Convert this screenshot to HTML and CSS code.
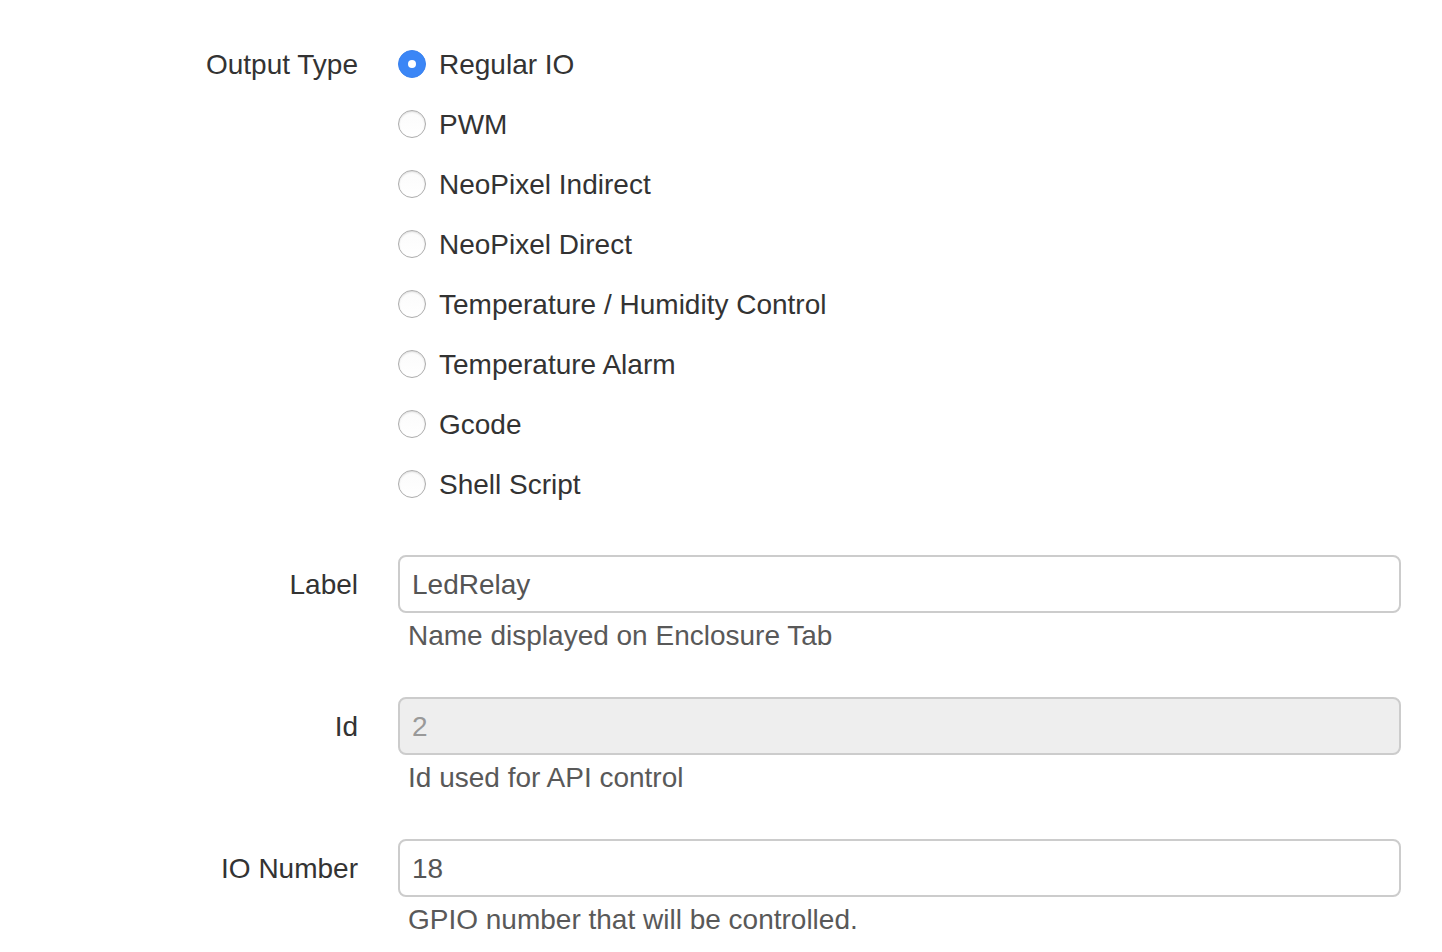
FILE: index.html
```html
<!DOCTYPE html>
<html>
<head>
<meta charset="utf-8">
<link rel="stylesheet" href="styles.css">
</head>
<body>
<form class="form">
  <div class="group radios-group">
    <div class="label">Output Type</div>
    <div class="controls">
      <label class="radio"><input type="radio" name="t" checked><span>Regular IO</span></label>
      <label class="radio"><input type="radio" name="t"><span>PWM</span></label>
      <label class="radio"><input type="radio" name="t"><span>NeoPixel Indirect</span></label>
      <label class="radio"><input type="radio" name="t"><span>NeoPixel Direct</span></label>
      <label class="radio"><input type="radio" name="t"><span>Temperature / Humidity Control</span></label>
      <label class="radio"><input type="radio" name="t"><span>Temperature Alarm</span></label>
      <label class="radio"><input type="radio" name="t"><span>Gcode</span></label>
      <label class="radio"><input type="radio" name="t"><span>Shell Script</span></label>
    </div>
  </div>
  <div class="group">
    <div class="label field-label">Label</div>
    <div class="controls">
      <input class="text" type="text" value="LedRelay">
      <div class="help">Name displayed on Enclosure Tab</div>
    </div>
  </div>
  <div class="group">
    <div class="label field-label">Id</div>
    <div class="controls">
      <input class="text" type="text" value="2" disabled>
      <div class="help">Id used for API control</div>
    </div>
  </div>
  <div class="group">
    <div class="label field-label">IO Number</div>
    <div class="controls">
      <input class="text" type="text" value="18">
      <div class="help">GPIO number that will be controlled.</div>
    </div>
  </div>
</form>
</body>
</html>
```
FILE: styles.css
```css
html, body {
  margin: 0;
  padding: 0;
  background: #fff;
}
body {
  font-family: "Liberation Sans", Arial, sans-serif;
  font-size: 28px;
  color: #333;
  overflow: hidden;
}
.form {
  padding: 34px 41px 0 38px;
}
.group {
  display: grid;
  grid-template-columns: 320px 1fr;
  column-gap: 40px;
  margin-bottom: 42px;
}
.radios-group {
  margin-bottom: 41px;
}
.label {
  text-align: right;
  line-height: 60px;
  padding-top: 1px;
  color: #333;
}
.field-label {
  line-height: 58px;
}
.controls {
  display: flex;
  flex-direction: column;
  min-width: 0;
}
.radio {
  display: flex;
  align-items: center;
  height: 60px;
  gap: 13px;
  cursor: pointer;
}
.radio span {
  padding-top: 2px;
}
.radio input {
  -webkit-appearance: none;
  appearance: none;
  margin: 0;
  width: 28px;
  height: 28px;
  border-radius: 50%;
  border: 1px solid #adadad;
  background: linear-gradient(#fbfbfb, #ffffff);
  box-shadow: inset 0 1px 2px rgba(0, 0, 0, 0.14);
  box-sizing: border-box;
  flex: none;
  position: relative;
}
.radio input:checked {
  background: #3b86f6;
  border-color: #3a82ee;
  box-shadow: none;
}
.radio input:checked::after {
  content: "";
  position: absolute;
  left: 50%;
  top: 50%;
  width: 8px;
  height: 8px;
  margin: -4px 0 0 -4px;
  border-radius: 50%;
  background: #fff;
}
.text {
  box-sizing: border-box;
  width: 100%;
  height: 58px;
  margin: 0;
  padding: 2px 12px 0;
  border: 2px solid #ccc;
  border-radius: 8px;
  font-family: inherit;
  font-size: 28px;
  color: #555;
  background: #fff;
  outline: none;
}
.text:disabled {
  background: #eee;
  color: #999;
  -webkit-text-fill-color: #999;
  opacity: 1;
}
.help {
  margin-top: 2px;
  padding-left: 10px;
  padding-top: 1px;
  height: 39px;
  line-height: 40px;
  color: #595959;
}
```
